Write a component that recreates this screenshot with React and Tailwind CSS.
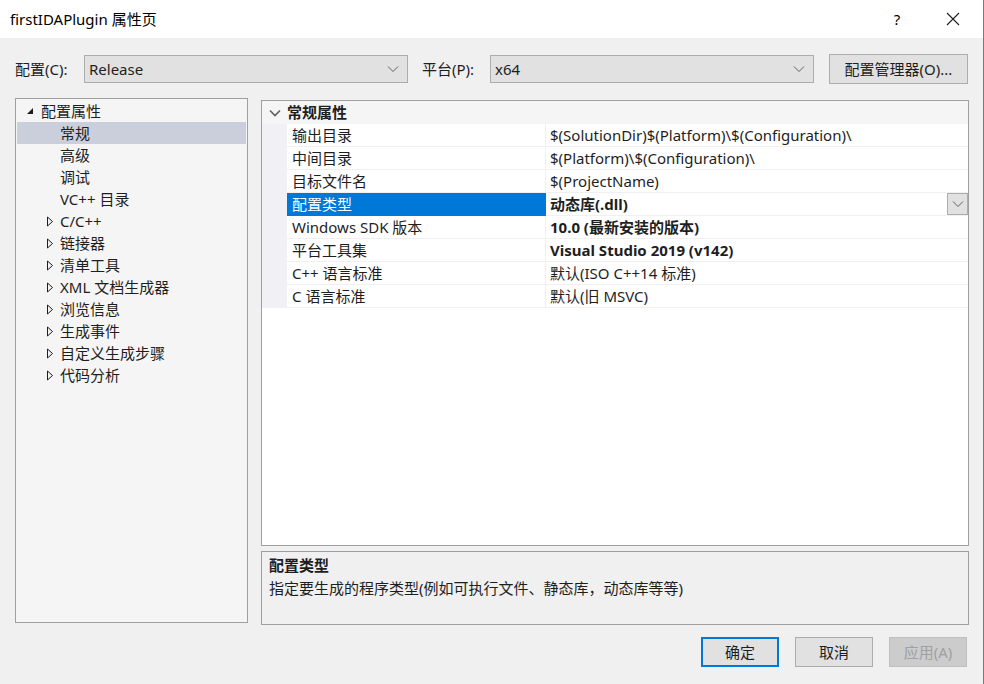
import React from 'react';

const FONT = { fontFamily: '"Segoe UI", "Noto Sans", "Noto Sans CJK SC", sans-serif' };

const treeItems = [
  { label: '配置属性', level: 0, state: 'open' },
  { label: '常规', level: 1, selected: true },
  { label: '高级', level: 1 },
  { label: '调试', level: 1 },
  { label: 'VC++ 目录', level: 1 },
  { label: 'C/C++', level: 0, state: 'closed' },
  { label: '链接器', level: 0, state: 'closed' },
  { label: '清单工具', level: 0, state: 'closed' },
  { label: 'XML 文档生成器', level: 0, state: 'closed' },
  { label: '浏览信息', level: 0, state: 'closed' },
  { label: '生成事件', level: 0, state: 'closed' },
  { label: '自定义生成步骤', level: 0, state: 'closed' },
  { label: '代码分析', level: 0, state: 'closed' },
];

const props = [
  { name: '输出目录', value: '$(SolutionDir)$(Platform)\\$(Configuration)\\' },
  { name: '中间目录', value: '$(Platform)\\$(Configuration)\\' },
  { name: '目标文件名', value: '$(ProjectName)' },
  { name: '配置类型', value: '动态库(.dll)', bold: true, selected: true },
  { name: 'Windows SDK 版本', value: '10.0 (最新安装的版本)', bold: true },
  { name: '平台工具集', value: 'Visual Studio 2019 (v142)', bold: true },
  { name: 'C++ 语言标准', value: '默认(ISO C++14 标准)' },
  { name: 'C 语言标准', value: '默认(旧 MSVC)' },
];

const Chevron = ({ w = 1 }) => (
  <svg width="12" height="8" viewBox="0 0 12 8">
    <path d="M1 1.5 L6 6.5 L11 1.5" fill="none" stroke="#606060" strokeWidth={w} />
  </svg>
);

const Select = ({ value }) => (
  <div className="w-[324px] h-[28px] bg-[#e1e1e1] border border-[#adadad] flex items-center pl-[4px] pr-[8px]">
    <span className="flex-1">{value}</span>
    <Chevron />
  </div>
);

const OpenArrow = () => (
  <svg width="8" height="8" viewBox="0 0 8 8">
    <polygon points="7,1 7,7 1,7" fill="#1e1e1e" />
  </svg>
);

const ClosedArrow = () => (
  <svg width="8" height="11" viewBox="0 0 8 11">
    <polygon points="1.5,1 6.5,5.5 1.5,10" fill="none" stroke="#1e1e1e" strokeWidth="1" />
  </svg>
);

const TreeRow = ({ it }) => (
  <div className={`h-[22px] flex items-center ${it.selected ? 'bg-[#cbcfdc]' : ''}`}>
    <span className="w-[24px] flex justify-center pl-[1px]">
      {it.state === 'open' ? <OpenArrow /> : null}
    </span>
    {it.state !== 'open' ? (
      <span className="w-[19px] flex pl-[5px]">
        {it.state === 'closed' ? <ClosedArrow /> : null}
      </span>
    ) : null}
    <span>{it.label}</span>
  </div>
);

export default function App() {
  return (
    <div style={FONT} className="w-[984px] h-[684px] bg-[#f0f0f0] text-[15px] text-[#1e1e1e] flex flex-col border-r border-[#7a7a7a] overflow-hidden">
      {/* title bar */}
      <div className="h-[38px] bg-white flex items-center pl-[10px] shrink-0">
        <span className="text-black">firstIDAPlugin 属性页</span>
        <span className="ml-auto w-[20px] text-center text-black">?</span>
        <span className="ml-[36px] mr-[20px] w-[20px] flex justify-center">
          <svg width="14" height="14" viewBox="0 0 14 14">
            <path d="M1 1 L13 13 M13 1 L1 13" stroke="#1e1e1e" strokeWidth="1.1" />
          </svg>
        </span>
      </div>

      {/* configuration row */}
      <div className="mt-[16px] h-[30px] flex items-center pl-[15px] shrink-0">
        <span className="w-[69px]">配置(C):</span>
        <Select value="Release" />
        <span className="ml-[14px] w-[68px]">平台(P):</span>
        <Select value="x64" />
        <button className="ml-[15px] w-[139px] h-[30px] bg-[#e1e1e1] border border-[#adadad] text-center">配置管理器(O)...</button>
      </div>

      {/* main area */}
      <div className="mt-[14px] flex pl-[15px]">
        <div className="w-[233px] h-[525px] bg-[#f5f5f5] border border-[#a0a0a0] pt-[1px] px-[1px]">
          {treeItems.map((it) => (
            <TreeRow key={it.label} it={it} />
          ))}
        </div>

        <div className="ml-[13px] w-[708px] flex flex-col">
          {/* property grid */}
          <div className="mt-[2px] h-[446px] bg-white border border-[#a0a0a0]">
            <div className="h-[23px] flex items-center bg-[#f5f5f5]">
              <span className="w-[25px] flex justify-center">
                <Chevron w={1.6} />
              </span>
              <span className="font-bold">常规属性</span>
            </div>
            {props.map((p) => (
              <div key={p.name} className="h-[23px] flex">
                <div className="w-[25px] bg-[#f0f0f5]" />
                <div
                  className={`w-[259px] pl-[5px] flex items-center border-b border-r ${
                    p.selected ? 'bg-[#0078d7] text-white border-[#0078d7]' : 'border-[#f0f0f0]'
                  }`}
                >
                  {p.name}
                </div>
                <div className="flex-1 flex items-center pl-[4px] border-b border-[#f0f0f0]">
                  <span className={`flex-1 ${p.bold ? 'font-bold' : ''}`}>{p.value}</span>
                  {p.selected ? (
                    <span className="w-[21px] h-[22px] bg-[#e1e1e1] border border-[#adadad] flex items-center justify-center">
                      <Chevron />
                    </span>
                  ) : null}
                </div>
              </div>
            ))}
          </div>

          {/* description */}
          <div className="mt-[5px] h-[74px] border border-[#a0a0a0] bg-[#f0f0f0] pl-[7px] pt-[2px]">
            <div className="font-bold leading-[22px]">配置类型</div>
            <div className="leading-[24px]">指定要生成的程序类型(例如可执行文件、静态库，动态库等等)</div>
          </div>
        </div>
      </div>

      {/* buttons */}
      <div className="mt-[12px] flex justify-end pr-[16px] gap-[16px]">
        <button className="w-[78px] h-[30px] bg-[#e1e1e1] border-2 border-[#0078d7]">确定</button>
        <button className="w-[78px] h-[30px] bg-[#e1e1e1] border border-[#adadad]">取消</button>
        <button className="w-[78px] h-[30px] bg-[#cccccc] border border-[#bfbfbf] text-[#a0a0a0]">应用(A)</button>
      </div>
    </div>
  );
}
